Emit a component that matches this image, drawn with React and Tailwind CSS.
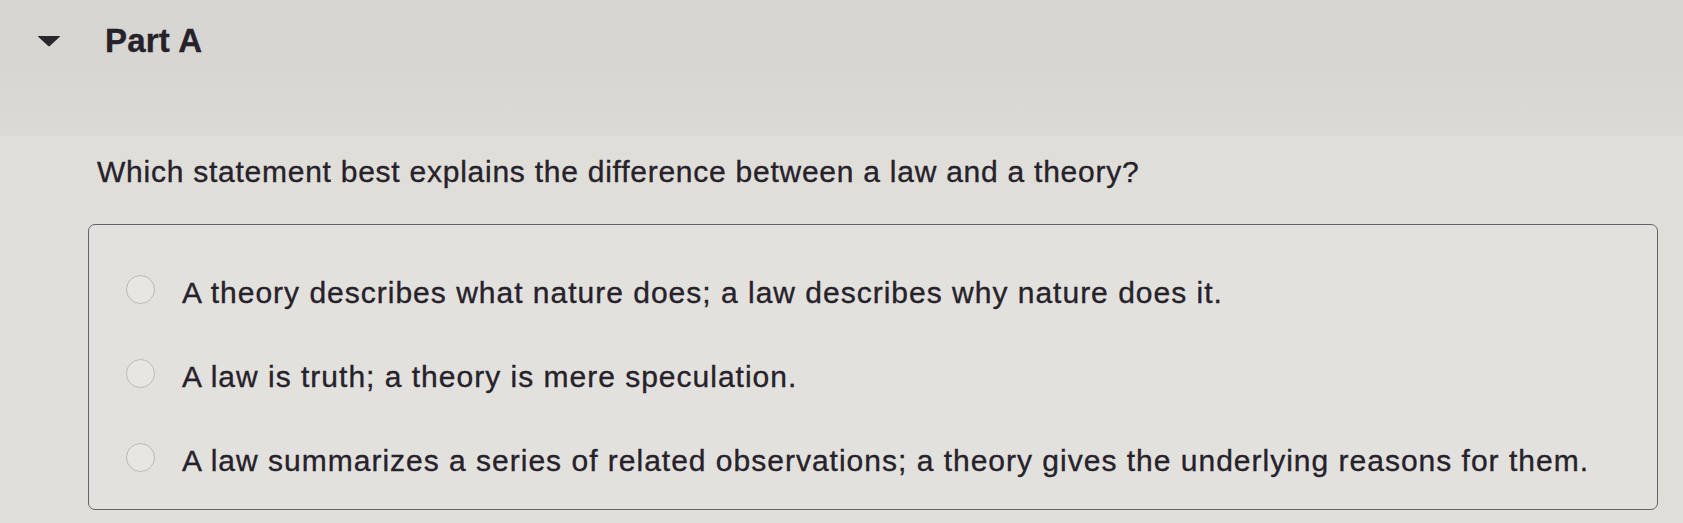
import React from "react";

const options = [
  "A theory describes what nature does; a law describes why nature does it.",
  "A law is truth; a theory is mere speculation.",
  "A law summarizes a series of related observations; a theory gives the underlying reasons for them.",
];

const Caret = () => (
  <svg width="24" height="12" viewBox="0 0 24 12" className="shrink-0">
    <path d="M1.5 1 L22.5 1 Q23.5 1 22.8 1.8 L12.8 11 Q12 11.7 11.2 11 L1.2 1.8 Q0.5 1 1.5 1 Z" fill="#2a272a" />
  </svg>
);

export default function App() {
  return (
    <div
      className="w-full h-[523px] overflow-hidden bg-[#dfded9] text-[#26212a] [-webkit-text-stroke:0.35px_#26212a]"
      style={{ fontFamily: '"Liberation Sans", Arial, Helvetica, sans-serif' }}
    >
      {/* collapsible part header */}
      <div className="h-[136px] bg-linear-to-b from-[#d7d5d1] via-[#d8d6d2] to-[#dcdad6] pt-[24px] pl-[37px] flex items-start">
        <div className="h-[33px] flex items-center">
          <Caret />
        </div>
        <h2 className="ml-[44px] text-[33px] leading-[33px] font-bold tracking-[0.2px]">Part A</h2>
      </div>

      {/* question */}
      <div className="pt-[21px] pl-[97px]">
        <p className="text-[30px] leading-[30px] tracking-[0.75px]">
          Which statement best explains the difference between a law and a theory?
        </p>
      </div>

      {/* answer choices */}
      <div className="mt-[37px] ml-[88px] mr-[25px] h-[286px] rounded-[7px] border-[1.5px] border-[#676264] bg-[#e2e1dd] pt-[50px] pl-[37px] flex flex-col gap-[48px]">
        {options.map((text) => (
          <label key={text} className="flex items-center">
            <span className="w-[29px] h-[29px] mb-[7px] rounded-full border-[1.5px] border-[#bcbab7] bg-[#e7e6e3] shrink-0 [-webkit-text-stroke:0]" />
            <span className="ml-[27px] text-[30px] leading-[30px] tracking-[1px]">{text}</span>
          </label>
        ))}
      </div>
    </div>
  );
}
